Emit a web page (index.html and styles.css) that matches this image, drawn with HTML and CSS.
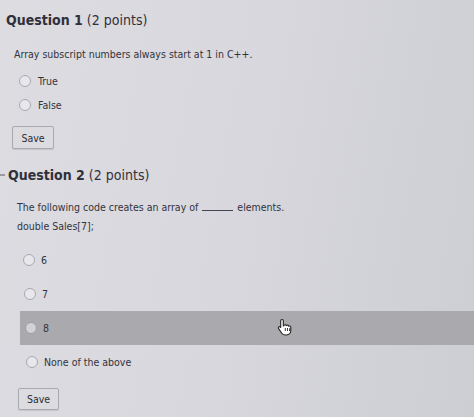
FILE: index.html
```html
<!DOCTYPE html>
<html>
<head>
<meta charset="utf-8">
<link rel="stylesheet" href="styles.css">
</head>
<body>
<div class="page">
  <section class="question q1">
    <h2 class="title"><b>Question 1</b> (2 points)</h2>
    <p class="prompt">Array subscript numbers always start at 1 in C++.</p>
    <div class="options">
      <label class="option"><span class="radio"></span>True</label>
      <label class="option"><span class="radio"></span>False</label>
    </div>
    <button class="save">Save</button>
  </section>
  <section class="question q2">
    <span class="tick"></span>
    <h2 class="title"><b>Question 2</b> (2 points)</h2>
    <p class="prompt">The following code creates an array of <span class="blank"></span> elements.</p>
    <p class="prompt code">double Sales[7];</p>
    <div class="options">
      <label class="option o6"><span class="radio"></span>6</label>
      <label class="option o7"><span class="radio"></span>7</label>
      <label class="option o8 hover"><span class="radio"></span>8
        <svg class="cursor" width="16" height="18" viewBox="0 0 16 18">
          <path d="M5 1.5c.8 0 1.3.6 1.3 1.3V8l.4-.2c.2-.8.8-1.1 1.4-1.1.6 0 1 .4 1.2.9.3-.4.8-.6 1.3-.5.6.1 1 .6 1.1 1.1.3-.2.7-.3 1.1-.2.6.2 1 .7 1 1.4v3.2c0 2.4-1.8 4.4-4.4 4.4H8.2c-1.4 0-2.6-.7-3.4-1.8L1.6 10.6c-.4-.6-.3-1.3.2-1.7.5-.4 1.2-.3 1.6.2l.3.4V2.8c0-.7.6-1.3 1.3-1.3z" fill="#fff" stroke="#222" stroke-width="1.1" stroke-linejoin="round"/>
          <path d="M8.3 10v3M10.5 10v3M12.6 10.3v2.7" stroke="#222" stroke-width="0.9"/>
        </svg>
      </label>
      <label class="option o9"><span class="radio"></span>None of the above</label>
    </div>
    <button class="save">Save</button>
  </section>
</div>
</body>
</html>
```
FILE: styles.css
```css
html, body {
  margin: 0;
  padding: 0;
}
body {
  width: 474px;
  height: 417px;
  overflow: hidden;
  background: linear-gradient(100deg, #dcdce1 0%, #d8d8de 45%, #cdced4 100%);
  font-family: "DejaVu Sans Condensed", "DejaVu Sans", Verdana, sans-serif;
  font-stretch: condensed;
  color: #33333d;
}
.page {
  display: flex;
  flex-direction: column;
}
.question {
  position: relative;
}
.title {
  margin: 0;
  font-size: 14px;
  font-weight: normal;
  line-height: 18px;
  color: #30303a;
}
.title b {
  font-weight: bold;
}
.prompt {
  margin: 0;
  font-size: 10.5px;
  line-height: 14px;
}
.blank {
  display: inline-block;
  width: 31px;
  height: 9px;
  border-bottom: 1px solid #44444c;
  vertical-align: baseline;
  margin: 0 1px;
}
.options {
  display: flex;
  flex-direction: column;
}
.option {
  display: flex;
  align-items: center;
  font-size: 10.5px;
  position: relative;
}
.radio {
  width: 12px;
  height: 12px;
  border-radius: 50%;
  border: 1px solid #a8a8b0;
  background: #e8e8ec;
  box-sizing: border-box;
}
.save {
  font-family: "DejaVu Sans Condensed", "DejaVu Sans", Verdana, sans-serif;
  font-stretch: condensed;
  font-size: 10.5px;
  color: #2c2c34;
  background: #dcdce0;
  border: 1px solid #a9a9b0;
  border-radius: 2px;
  padding: 0;
  box-shadow: 0 1px 1px rgba(0,0,0,0.1);
}

/* Question 1 */
.q1 {
  padding: 11px 0 0 6px;
}
.q1 .prompt {
  margin: 18px 0 0 8px;
}
.q1 .options {
  margin: 13px 0 0 13px;
  gap: 10px;
}
.q1 .option {
  height: 14px;
}
.q1 .option .radio {
  margin-right: 7px;
}
.q1 .save {
  margin: 14px 0 0 6px;
  width: 42px;
  height: 23px;
}

/* Question 2 */
.q2 {
  padding: 17px 0 0 8px;
}
.tick {
  position: absolute;
  left: 0;
  top: 25px;
  width: 5px;
  height: 2px;
  background: #9a9aa2;
}
.q2 .prompt {
  margin: 16px 0 0 9px;
}
.q2 .prompt.code {
  margin-top: 5px;
}
.q2 .options {
  margin: 10px 0 0 0;
}
.q2 .option {
  height: 34px;
}
.q2 .option .radio {
  margin-right: 6px;
}
.o6 { padding-left: 15px; }
.o7 { padding-left: 16px; }
.o8 {
  margin-left: 12px;
  padding-left: 5px;
  height: 33px;
  background: #aaaaae;
}
.o8 .radio {
  background: #d2d2d6;
  border-color: #9c9ca2;
}
.o9 { padding-left: 18px; }
.cursor {
  position: absolute;
  left: 257px;
  top: 7px;
}
.q2 .save {
  margin: 9px 0 0 10px;
  width: 41px;
  height: 22px;
}
```
